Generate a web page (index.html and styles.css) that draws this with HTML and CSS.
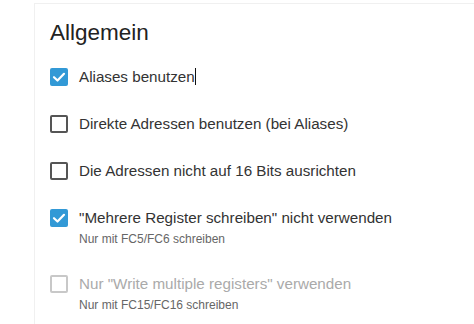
FILE: index.html
```html
<!DOCTYPE html>
<html lang="de">
<head>
<meta charset="utf-8">
<title>Allgemein</title>
<link rel="stylesheet" href="styles.css">
</head>
<body>
<div class="card">
  <h2 class="title">Allgemein</h2>
  <div class="options">
    <div class="option">
      <span class="box checked"><svg viewBox="0 0 18 18" width="18" height="18"><path d="M4 9.2 L7.5 12.5 L14 5.8" fill="none" stroke="#fff" stroke-width="2.2" stroke-linecap="round" stroke-linejoin="round"/></svg></span>
      <div class="text"><div class="label">Aliases benutzen<span class="caret"></span></div></div>
    </div>
    <div class="option">
      <span class="box"></span>
      <div class="text"><div class="label">Direkte Adressen benutzen (bei Aliases)</div></div>
    </div>
    <div class="option">
      <span class="box"></span>
      <div class="text"><div class="label">Die Adressen nicht auf 16 Bits ausrichten</div></div>
    </div>
    <div class="option">
      <span class="box checked"><svg viewBox="0 0 18 18" width="18" height="18"><path d="M4 9.2 L7.5 12.5 L14 5.8" fill="none" stroke="#fff" stroke-width="2.2" stroke-linecap="round" stroke-linejoin="round"/></svg></span>
      <div class="text"><div class="label">"Mehrere Register schreiben" nicht verwenden</div><div class="helper">Nur mit FC5/FC6 schreiben</div></div>
    </div>
    <div class="option disabled">
      <span class="box"></span>
      <div class="text"><div class="label">Nur "Write multiple registers" verwenden</div><div class="helper">Nur mit FC15/FC16 schreiben</div></div>
    </div>
  </div>
</div>
</body>
</html>
```
FILE: styles.css
```css
html, body {
  margin: 0;
  padding: 0;
  background: #fff;
  font-family: "Liberation Sans", Arial, sans-serif;
  overflow: hidden;
}
.card {
  box-sizing: border-box;
  margin: 3px 0 0 34px;
  border-top: 1px solid #f0f0f0;
  border-left: 1px solid #f0f0f0;
  padding: 17px 0 0 15px;
  height: 321px;
}
.title {
  margin: 0;
  font-size: 22.5px;
  line-height: 24px;
  font-weight: 400;
  color: #222;
}
.options {
  display: flex;
  flex-direction: column;
  gap: 27px;
  margin-top: 22px;
}
.option {
  display: flex;
  align-items: flex-start;
  gap: 11px;
}
.box {
  box-sizing: border-box;
  width: 18px;
  height: 18px;
  margin-top: 1px;
  border: 2px solid #555;
  border-radius: 2px;
  flex: none;
  display: flex;
  align-items: center;
  justify-content: center;
}
.box.checked {
  background: #3299d6;
  border: none;
}
.label {
  font-size: 15.2px;
  line-height: 20px;
  color: #333;
}
.caret {
  display: inline-block;
  width: 1px;
  height: 17px;
  background: #111;
  vertical-align: -3px;
}
.helper {
  font-size: 12px;
  line-height: 16px;
  color: #666;
  margin-top: 3px;
}
.disabled .box {
  border-color: #c8c8c8;
}
.disabled .label {
  color: #aaa;
}
```
